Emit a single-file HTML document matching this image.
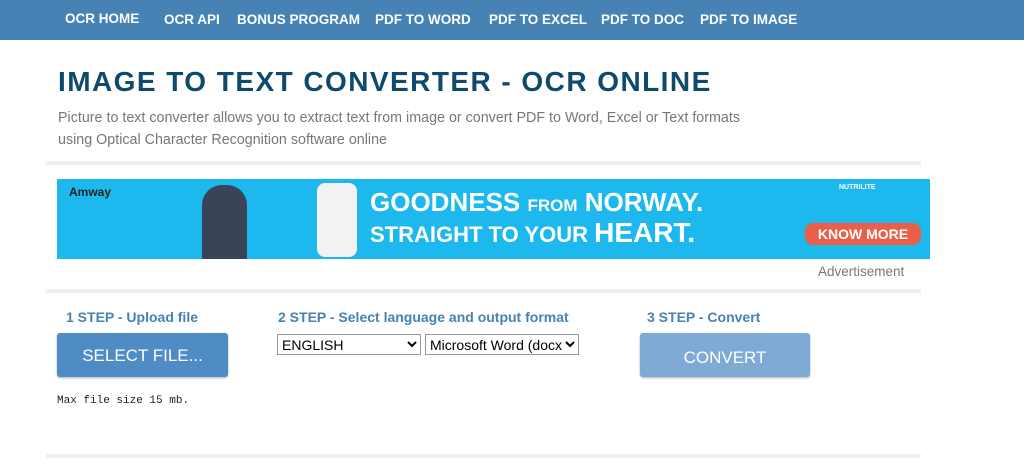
<!DOCTYPE html>
<html><head><meta charset="utf-8"><style>
body{margin:0;width:1024px;height:460px;background:#fff;position:relative;overflow:hidden;font-family:"Liberation Sans",sans-serif}
.a{position:absolute;white-space:nowrap}
.nav{position:absolute;left:0;top:0;width:1024px;height:40px;background:#4682b4}
.nav span{position:absolute;top:11px;color:#fff;font-weight:bold;font-size:13.5px}
.sep{position:absolute;left:46px;width:875px;height:4px;background:#f0f0f0}
.step{color:#4682b4;font-weight:bold;font-size:14px;top:309px}
.btn{position:absolute;border-radius:3px;color:#fff;font-size:17px;text-align:center;line-height:48px;box-shadow:0 1px 2px rgba(0,0,0,.3)}
select{position:absolute;height:21px;font-family:"Liberation Sans",sans-serif;font-size:14px;border:1px solid #999;background:#fff;padding:0}
</style></head><body>
<div class="nav">
<span style="left:65px">OCR HOME</span>
<span style="left:164px;top:12px">OCR API</span>
<span style="left:237px;top:12px">BONUS PROGRAM</span>
<span style="left:375px;top:12px">PDF TO WORD</span>
<span style="left:489px;top:12px">PDF TO EXCEL</span>
<span style="left:601px;top:12px">PDF TO DOC</span>
<span style="left:700px;top:12px">PDF TO IMAGE</span>
</div>
<div class="a" style="left:58px;top:66px;font-size:28px;font-weight:bold;color:#0d4a6b;letter-spacing:1.45px">IMAGE TO TEXT CONVERTER - OCR ONLINE</div>
<div class="a" style="left:58px;top:107px;font-size:14.3px;color:#777;line-height:22px">Picture to text converter allows you to extract text from image or convert PDF to Word, Excel or Text formats<br>using Optical Character Recognition software online</div>
<div class="sep" style="top:161px"></div>
<div class="a" style="left:57px;top:179px;width:873px;height:80px;background:#1db8ee">
<div class="a" style="left:12px;top:6px;font-size:12px;font-weight:bold;color:#222">Amway</div>
<div class="a" style="left:145px;top:6px;width:45px;height:74px;background:#3a4358;border-radius:20px 20px 0 0"></div>
<div class="a" style="left:260px;top:4px;width:40px;height:74px;background:#f2f2f2;border-radius:8px"></div>
<div class="a" style="left:313px;top:8px;font-size:26px;font-weight:bold;color:#fff">GOODNESS <span style="font-size:17px">FROM</span> NORWAY.</div>
<div class="a" style="left:313px;top:38px;font-size:22px;font-weight:bold;color:#fff">STRAIGHT TO YOUR <span style="font-size:28px">HEART.</span></div>
<div class="a" style="left:748px;top:44px;width:116px;height:22px;border-radius:8px;background:#e8604a;color:#fff;font-weight:bold;font-size:14px;text-align:center;line-height:22px">KNOW MORE</div>
<div class="a" style="left:782px;top:5px;font-size:7px;font-weight:bold;color:#fff">NUTRILITE</div>
</div>
<div class="a" style="left:818px;top:264px;font-size:13.5px;color:#777">Advertisement</div>
<div class="sep" style="top:289px"></div>
<div class="a step" style="left:66px">1 STEP - Upload file</div>
<div class="a step" style="left:278px">2 STEP - Select language and output format</div>
<div class="a step" style="left:647px">3 STEP - Convert</div>
<div class="btn" style="left:57px;top:333px;width:171px;height:44px;background:#4f8bc4;line-height:46px">SELECT FILE...</div>
<select style="left:277px;top:334px;width:144px"><option>ENGLISH</option></select>
<select style="left:425px;top:334px;width:154px"><option>Microsoft Word (docx)</option></select>
<div class="btn" style="left:640px;top:333px;width:170px;height:44px;background:#80aad6;line-height:50px">CONVERT</div>
<div class="a" style="left:57px;top:395px;font-family:'Liberation Mono',monospace;font-size:11px;color:#222">Max file size 15 mb.</div>
<div class="sep" style="top:454px"></div>
</body></html>
